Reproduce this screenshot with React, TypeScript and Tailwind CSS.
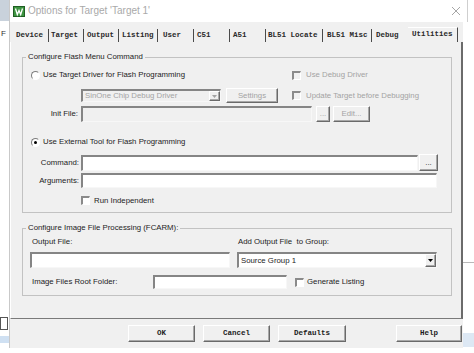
import React from "react"

const sans = "font-['Liberation_Sans',Arial,sans-serif]"
const mono = "font-['Liberation_Mono','Courier_New',monospace] font-bold"

// classic win32 3d borders
const sunken = "border-t-2 border-l-2 border-b border-r border-t-[#858585] border-l-[#858585] border-b-[#f7f7f7] border-r-[#f7f7f7]"
const raised = "border border-t-white border-l-white border-b-[#6a6a6a] border-r-[#6a6a6a] shadow-[inset_-1px_-1px_0_#a8a8a8]"

const label = "text-[7.8px] leading-[10px] text-[#1c1c1c] whitespace-pre"
const grey = "text-[7.8px] leading-[10px] text-[#a3a3a3] whitespace-pre"

function Radio({ checked }: { checked?: boolean }) {
    return (
        <span className="w-[9px] h-[9px] rounded-full border border-t-[#7d7d7d] border-l-[#7d7d7d] border-b-white border-r-white bg-white flex items-center justify-center shrink-0">
            {checked && <span className="w-[3px] h-[3px] rounded-full bg-black" />}
        </span>
    )
}

function Check({ disabled, cls = "" }: { disabled?: boolean; cls?: string }) {
    return (
        <span
            className={`${cls} block w-[9px] h-[9px] shrink-0 border-t-2 border-l-2 border-b border-r border-t-[#8a8a8a] border-l-[#8a8a8a] border-b-white border-r-white ${disabled ? "bg-[#f0f0f0]" : "bg-white"}`}
        />
    )
}

function Combo({ cls, text, disabled }: { cls: string; text: string; disabled?: boolean }) {
    return (
        <div className={`${cls} flex items-stretch ${sunken} ${disabled ? "bg-[#f0f0f0]" : "bg-white"}`}>
            <span className={`flex-1 flex items-center pl-[2px] ${disabled ? grey : label}`}>{text}</span>
            <span className={`w-[11px] flex items-center justify-center bg-[#f0f0f0] ${raised}`}>
                <svg width="5" height="3" viewBox="0 0 5 3">
                    <path d="M0 0h5L2.5 3z" fill={disabled ? "#a3a3a3" : "#000"} />
                </svg>
            </span>
        </div>
    )
}

function Btn({ cls, text, disabled }: { cls: string; text: string; disabled?: boolean }) {
    return (
        <span className={`${cls} flex items-center justify-center bg-[#f0f0f0] ${raised} ${disabled ? grey : label}`}>
            {text}
        </span>
    )
}

const tabs = [
    { name: "Device", cls: "w-[37px] pl-[4px]" },
    { name: "Target", cls: "w-[35px] pl-[2px]" },
    { name: "Output", cls: "w-[35px] pl-[3px]" },
    { name: "Listing", cls: "w-[39px] pl-[3px]" },
    { name: "User", cls: "w-[36px] pl-[5px]" },
    { name: "C51", cls: "w-[36px] pl-[3px]" },
    { name: "A51", cls: "w-[36px] pl-[3px]" },
    { name: "BL51 Locate", cls: "w-[57px] pl-[2px]" },
    { name: "BL51 Misc", cls: "w-[49px] pl-[4px]" },
]

function TabRow() {
    return (
        <div className={`h-[20px] flex items-end pl-[2px] ${mono} text-[7.5px] text-[#2a2a2a]`}>
            {tabs.map(t => (
                <span key={t.name} className={`${t.cls} h-[13px] flex items-center border-r border-r-[#4a4a4a] whitespace-pre`}>
                    {t.name}
                </span>
            ))}
            <span className="w-[36px] pl-[4px] h-[13px] flex items-center">Debug</span>
            <span className="w-[50px] pl-[4px] h-[15px] flex items-center border-r border-r-[#4a4a4a] border-t border-t-white">
                Utilities
            </span>
        </div>
    )
}

function FlashGroup() {
    return (
        <fieldset className="ml-[11px] mt-[10px] w-[430px] border border-[#c2c2c2] pb-[7px]">
            <legend className={`ml-[3px] px-[2px] ${label}`}>Configure Flash Menu Command</legend>
            <div className="flex flex-col">
                <div className="mt-[8px] h-[10px] flex items-center">
                    <div className="w-[269px] flex items-center pl-[8px]">
                        <Radio />
                        <span className={`ml-[3px] ${label}`}>Use Target Driver for Flash Programming</span>
                    </div>
                    <Check disabled />
                    <span className={`ml-[5px] ${grey}`}>Use Debug Driver</span>
                </div>
                <div className="mt-[8px] h-[15px] flex items-center">
                    <div className="w-[269px] flex items-center pl-[58px]">
                        <Combo cls="w-[140px] h-[13px]" text="SinOne Chip Debug Driver" disabled />
                        <Btn cls="ml-[5px] w-[52px] h-[15px]" text="Settings" disabled />
                    </div>
                    <Check disabled />
                    <span className={`ml-[5px] ${grey}`}>Update Target before Debugging</span>
                </div>
                <div className="mt-[3px] h-[16px] flex items-center">
                    <span className={`w-[55px] text-right ${label}`}>Init File:</span>
                    <span className={`ml-[3px] w-[231px] h-[16px] bg-[#f0f0f0] ${sunken}`} />
                    <Btn cls="ml-[4px] w-[14px] h-[16px]" text="..." disabled />
                    <Btn cls="ml-[3px] w-[37px] h-[16px]" text="Edit..." disabled />
                </div>
                <div className="mt-[15px] h-[10px] flex items-center pl-[8px]">
                    <Radio checked />
                    <span className={`ml-[3px] ${label}`}>Use External Tool for Flash Programming</span>
                </div>
                <div className="mt-[7px] h-[17px] flex items-center">
                    <span className={`w-[56px] text-right ${label}`}>Command:</span>
                    <span className={`ml-[2px] w-[337px] h-[16px] bg-white ${sunken}`} />
                    <Btn cls="ml-[1px] w-[19px] h-[17px]" text="..." />
                </div>
                <div className="mt-[2px] h-[15px] flex items-center">
                    <span className={`w-[56px] text-right ${label}`}>Arguments:</span>
                    <span className={`ml-[2px] w-[356px] h-[15px] bg-white ${sunken}`} />
                </div>
                <div className="mt-[8px] h-[9px] flex items-center pl-[58px]">
                    <Check />
                    <span className={`ml-[4px] ${label}`}>Run Independent</span>
                </div>
            </div>
        </fieldset>
    )
}

function ImageGroup() {
    return (
        <fieldset className="ml-[11px] mt-[10px] w-[430px] border border-[#c2c2c2] pb-[6px]">
            <legend className={`ml-[3px] px-[2px] ${label}`}>Configure Image File Processing (FCARM):</legend>
            <div className="flex flex-col">
                <div className="mt-[4px] h-[10px] flex items-center">
                    <span className={`w-[215px] pl-[9px] ${label}`}>Output File:</span>
                    <span className={label}>Add Output File  to Group:</span>
                </div>
                <div className="mt-[5px] h-[16px] flex items-center pl-[7px]">
                    <span className={`w-[200px] h-[16px] bg-white ${sunken}`} />
                    <Combo cls="ml-[7px] w-[200px] h-[16px]" text="Source Group 1" />
                </div>
                <div className="mt-[7px] h-[14px] flex items-center">
                    <span className={`w-[130px] pl-[9px] ${label}`}>Image Files Root Folder:</span>
                    <span className={`w-[134px] h-[14px] bg-white ${sunken}`} />
                    <Check cls="ml-[8px]" />
                    <span className={`ml-[3px] ${label}`}>Generate Listing</span>
                </div>
            </div>
        </fieldset>
    )
}

function TitleBar() {
    return (
        <div className="h-[22px] bg-white flex items-center">
            <svg className="ml-[3px]" width="12" height="11" viewBox="0 0 12 11">
                <rect x="0.5" y="0.5" width="11" height="10" fill="#3d9440" stroke="#1f5e22" />
                <path d="M2.5 2.5 L4.3 8.5 L6 4.5 L7.7 8.5 L9.5 2.5" fill="none" stroke="#fff" strokeWidth="1.3" />
            </svg>
            <span className="ml-[3px] text-[10px] leading-[12px] text-[#a9a9a9]">Options for Target 'Target 1'</span>
            <svg className="ml-auto mr-[2px]" width="10" height="10" viewBox="0 0 10 10">
                <path d="M1 1 L9 9 M9 1 L1 9" stroke="#a6a6a6" strokeWidth="1" />
            </svg>
        </div>
    )
}

export default function App() {
    return (
        <div className={`w-[474px] h-[353px] overflow-hidden bg-white flex flex-col ${sans}`}>
            <div className="h-[348px] flex">
                {/* bits of the window behind the dialog */}
                <div className="w-[10px] flex flex-col border-r border-r-[#c9c9c9]">
                    <div className="h-[21px] bg-[#c9d2dc]" />
                    <span className="mt-[8px] pl-[1px] text-[8px] leading-[10px] text-[#333]">F</span>
                    <div className="mt-[278px] w-[8px] h-[13px] border border-[#555] bg-white" />
                    <div className="mt-[6px] h-[7px] bg-[#cfe0f2]" />
                </div>
                <div className="w-[453px] flex flex-col">
                    <TitleBar />
                    <div className="flex-1 bg-[#f0f0f0] flex flex-col">
                        <TabRow />
                        <div className="h-[277px] flex flex-col border-l border-l-white border-r-2 border-r-[#6b6b6b] border-b border-b-[#7a7a7a]">
                            <FlashGroup />
                            <ImageGroup />
                        </div>
                        <div className={`h-[29px] flex items-start pt-[6px] ${mono} text-[7.5px] text-[#1c1c1c]`}>
                            <span className={`ml-[118px] w-[67px] h-[17px] flex items-center justify-center ${raised}`}>OK</span>
                            <span className={`ml-[8px] w-[67px] h-[17px] flex items-center justify-center ${raised}`}>Cancel</span>
                            <span className={`ml-[8px] w-[68px] h-[17px] flex items-center justify-center ${raised}`}>Defaults</span>
                            <span className={`ml-[50px] w-[66px] h-[17px] flex items-center justify-center ${raised}`}>Help</span>
                        </div>
                    </div>
                </div>
                <div className="w-[11px] flex flex-col">
                    <div className="h-[22px] ml-[4px] border-l border-l-[#cfcfcf]" />
                    <div className="mt-[240px] h-px bg-[#b8b8b8]" />
                    <div className="mt-[70px] h-[14px] bg-[#dde8f4]" />
                </div>
            </div>
            <div className="h-[5px] bg-white" />
        </div>
    )
}
